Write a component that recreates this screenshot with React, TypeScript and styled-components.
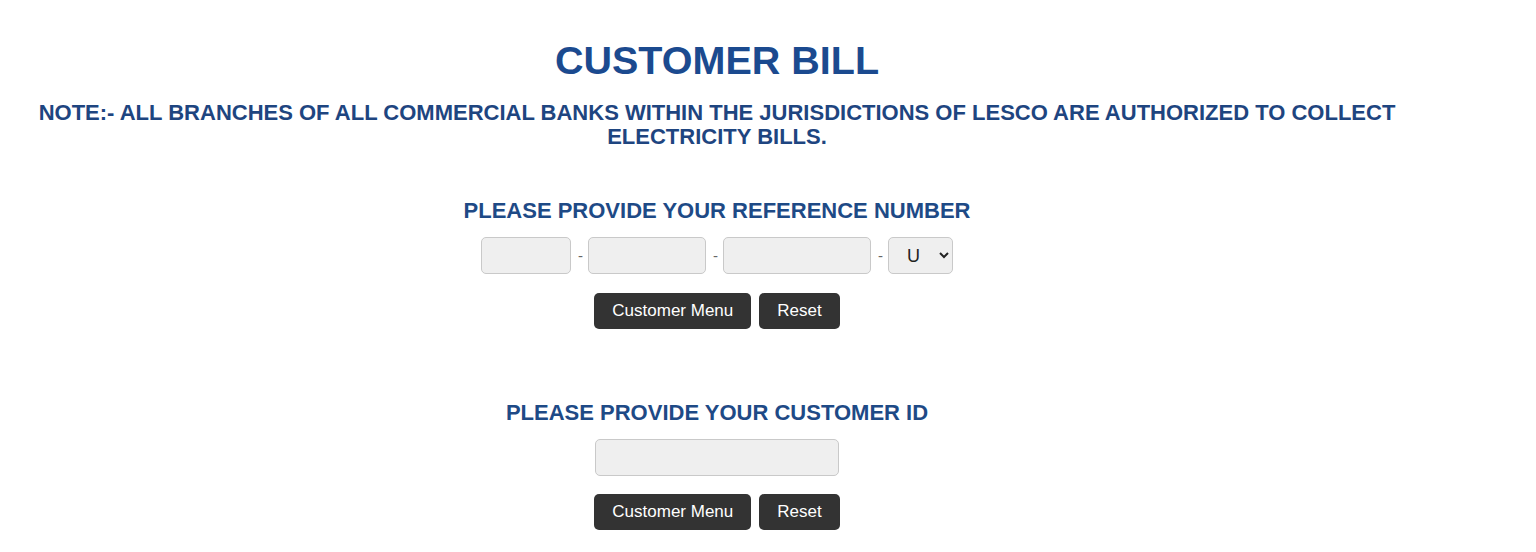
import styled, { createGlobalStyle } from "styled-components";

const GlobalStyle = createGlobalStyle`
  body {
    margin: 8px;
    background: #fff;
    font-family: "Liberation Sans", Arial, sans-serif;
  }
`;

const Page = styled.div`
  width: 1418px;
  display: flex;
  flex-direction: column;
  align-items: center;
  text-align: center;
`;

const Title = styled.h1`
  margin: 29px 0 0;
  font-size: 39.5px;
  line-height: 46px;
  font-weight: bold;
  color: #1b4a8f;
`;

const Note = styled.p`
  margin: 18px 0 0;
  font-size: 22px;
  line-height: 24px;
  font-weight: bold;
  color: #1e4580;
`;

const SubHeading = styled.h3<{ $top: number }>`
  margin: ${(p) => p.$top}px 0 0;
  font-size: 22px;
  line-height: 25px;
  font-weight: bold;
  color: #1e4a86;
`;

const InputRow = styled.div<{ $top: number }>`
  margin-top: ${(p) => p.$top}px;
  display: flex;
  align-items: center;
  gap: 7px;
`;

const Dash = styled.span`
  color: #666;
  font-size: 15px;
  width: 3px;
`;

const TextBox = styled.input<{ $w: number }>`
  box-sizing: border-box;
  width: ${(p) => p.$w}px;
  height: 37px;
  border: 1px solid #c9c9c9;
  border-radius: 5px;
  background: #efefef;
  font-family: inherit;
  font-size: 16px;
  padding: 0 8px;
  outline: none;
`;

const Select = styled.select`
  box-sizing: border-box;
  width: 65px;
  height: 37px;
  border: 1px solid #c9c9c9;
  border-radius: 5px;
  background: #efefef;
  font-family: inherit;
  font-size: 18px;
  color: #222;
  padding: 0 6px 0 14px;
`;

const ButtonRow = styled.div<{ $top: number }>`
  margin-top: ${(p) => p.$top}px;
  display: flex;
  gap: 8px;
`;

const Button = styled.button`
  height: 36px;
  padding: 0 18px;
  border: none;
  border-radius: 5px;
  background: #333;
  color: #fff;
  font-family: inherit;
  font-size: 17px;
  cursor: pointer;
`;

const App = () => {
  return (
    <>
      <GlobalStyle />
      <Page>
        <Title>CUSTOMER BILL</Title>
        <Note>
          NOTE:- ALL BRANCHES OF ALL COMMERCIAL BANKS WITHIN THE JURISDICTIONS
          OF LESCO ARE AUTHORIZED TO COLLECT ELECTRICITY BILLS.
        </Note>

        <SubHeading $top={49}>PLEASE PROVIDE YOUR REFERENCE NUMBER</SubHeading>
        <InputRow $top={14}>
          <TextBox $w={90} />
          <Dash>-</Dash>
          <TextBox $w={118} />
          <Dash>-</Dash>
          <TextBox $w={148} />
          <Dash>-</Dash>
          <Select defaultValue="U">
            <option value="U">U</option>
            <option value="R">R</option>
          </Select>
        </InputRow>
        <ButtonRow $top={19}>
          <Button>Customer Menu</Button>
          <Button>Reset</Button>
        </ButtonRow>

        <SubHeading $top={71}>PLEASE PROVIDE YOUR CUSTOMER ID</SubHeading>
        <InputRow $top={14}>
          <TextBox $w={244} />
        </InputRow>
        <ButtonRow $top={18}>
          <Button>Customer Menu</Button>
          <Button>Reset</Button>
        </ButtonRow>
      </Page>
    </>
  );
};

export default App;
